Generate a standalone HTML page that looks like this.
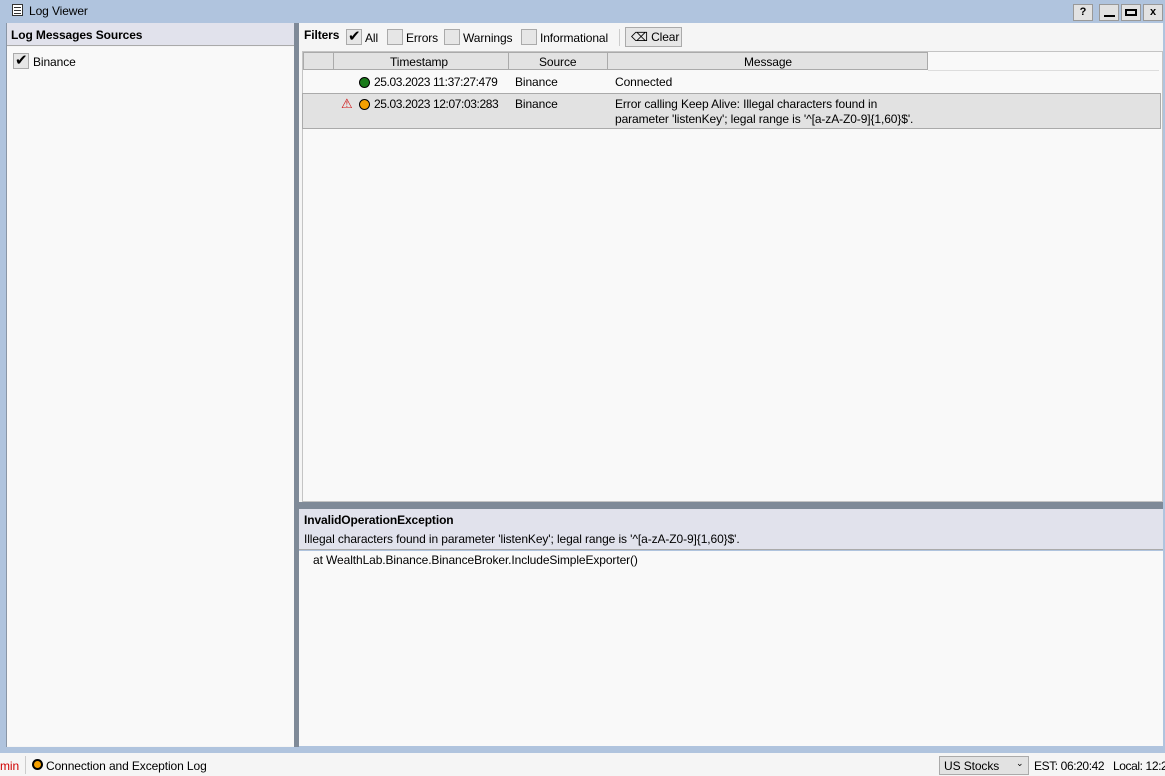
<!DOCTYPE html>
<html><head><style>
*{margin:0;padding:0;box-sizing:border-box}
body{width:1165px;height:776px;overflow:hidden;background:#f5f5f5;font-family:"Liberation Sans",sans-serif;font-size:12px;color:#000;position:relative}
.a{position:absolute}
.t{white-space:nowrap;letter-spacing:-0.1px}
.cb{position:absolute;width:16px;height:16px;border:1px solid #aaa;background:#e6e6e6}
.btn{position:absolute;top:4px;width:20px;height:17px;background:#e2e2e2;border:1px solid #999}
</style></head><body>
<div class="a" style="left:0;top:0;width:1165px;height:753px;background:#b0c4de"></div>
<div class="a t" style="left:12px;top:4px;width:11px;height:12px;border:1px solid #333;background:#fff"></div>
<div class="a" style="left:14px;top:7px;width:7px;height:1px;background:#333;box-shadow:0 3px #333,0 6px #333"></div>
<div class="a t" style="left:29px;top:4px;font-size:12px">Log Viewer</div>
<div class="btn" style="left:1073px;text-align:center;font-weight:bold;font-size:11px;line-height:15px">?</div>
<div class="btn" style="left:1099px"><div class="a" style="left:4px;top:10px;width:11px;height:2px;background:#000"></div></div>
<div class="btn" style="left:1121px"><div class="a" style="left:3px;top:4px;width:12px;height:7px;border:2px solid #000"></div></div>
<div class="btn" style="left:1143px;text-align:center;font-weight:bold;font-size:11px;line-height:15px">x</div>

<div class="a" style="left:6px;top:23px;width:288px;height:724px;background:#f5f5f5;border-left:1px solid #8a96a6"></div>
<div class="a" style="left:7px;top:23px;width:287px;height:23px;background:#e1e2ec;border-bottom:1px solid #aaa"></div>
<div class="a t" style="left:11px;top:28px;font-weight:bold">Log Messages Sources</div>
<div class="a" style="left:7px;top:47px;width:287px;height:699px;background:#f9f9f9"></div>
<div class="cb" style="left:13px;top:53px"></div>
<div class="a" style="left:15px;top:51px;font-size:15px">✔</div>
<div class="a t" style="left:33px;top:55px">Binance</div>

<div class="a" style="left:294px;top:23px;width:5px;height:724px;background:#7f8a98"></div>

<div class="a" style="left:299px;top:23px;width:864px;height:479px;background:#f5f5f5"></div>
<div class="a t" style="left:304px;top:28px;font-weight:bold">Filters</div>
<div class="cb" style="left:346px;top:29px"></div><div class="a" style="left:348px;top:27px;font-size:15px">✔</div>
<div class="a t" style="left:365px;top:31px">All</div>
<div class="cb" style="left:387px;top:29px"></div><div class="a t" style="left:406px;top:31px">Errors</div>
<div class="cb" style="left:444px;top:29px"></div><div class="a t" style="left:463px;top:31px">Warnings</div>
<div class="cb" style="left:521px;top:29px"></div><div class="a t" style="left:540px;top:31px">Informational</div>
<div class="a" style="left:619px;top:29px;width:1px;height:17px;background:#ccc"></div>
<div class="a" style="left:625px;top:27px;width:57px;height:20px;background:#e6e6e6;border:1px solid #aaa"></div>
<div class="a t" style="left:631px;top:30px">⌫&nbsp;Clear</div>

<div class="a" style="left:302px;top:51px;width:861px;height:451px;background:#f9f9f9;border:1px solid #c4c4c4"></div>
<div class="a" style="left:303px;top:52px;width:625px;height:18px;background:#e2e2e2;border:1px solid #aaa"></div>
<div class="a" style="left:333px;top:52px;width:1px;height:18px;background:#aaa"></div>
<div class="a" style="left:508px;top:52px;width:1px;height:18px;background:#aaa"></div>
<div class="a" style="left:607px;top:52px;width:1px;height:18px;background:#aaa"></div>
<div class="a t" style="left:390px;top:55px">Timestamp</div>
<div class="a t" style="left:539px;top:55px">Source</div>
<div class="a t" style="left:744px;top:55px">Message</div>
<div class="a" style="left:928px;top:70px;width:231px;height:1px;background:#ddd"></div>

<div class="a" style="left:359px;top:77px;width:11px;height:11px;border-radius:50%;background:#1a7a1a;border:1px solid #000"></div>
<div class="a t" style="left:374px;top:75px;letter-spacing:-0.4px">25.03.2023 11:37:27:479</div>
<div class="a t" style="left:515px;top:75px">Binance</div>
<div class="a t" style="left:615px;top:75px">Connected</div>

<div class="a" style="left:302px;top:93px;width:859px;height:36px;background:#e2e2e2;border:1px solid #aaa"></div>
<div class="a" style="left:341px;top:96px;color:#d01010;font-size:13px">⚠</div>
<div class="a" style="left:359px;top:99px;width:11px;height:11px;border-radius:50%;background:#f5a000;border:1px solid #000"></div>
<div class="a t" style="left:374px;top:97px;letter-spacing:-0.4px">25.03.2023 12:07:03:283</div>
<div class="a t" style="left:515px;top:97px">Binance</div>
<div class="a t" style="left:615px;top:97px;line-height:15px">Error calling Keep Alive: Illegal characters found in<br>parameter 'listenKey'; legal range is '^[a-zA-Z0-9]{1,60}$'.</div>

<div class="a" style="left:299px;top:502px;width:864px;height:7px;background:#7f8a98"></div>
<div class="a" style="left:299px;top:509px;width:864px;height:41px;background:#e1e2ec;border-bottom:1px solid #aaa"></div>
<div class="a t" style="left:304px;top:513px;font-weight:bold">InvalidOperationException</div>
<div class="a t" style="left:304px;top:532px">Illegal characters found in parameter 'listenKey'; legal range is '^[a-zA-Z0-9]{1,60}$'.</div>
<div class="a" style="left:299px;top:551px;width:864px;height:195px;background:#f9f9f9"></div>
<div class="a t" style="left:313px;top:553px">at WealthLab.Binance.BinanceBroker.IncludeSimpleExporter()</div>

<div class="a" style="left:0;top:753px;width:1165px;height:23px;background:#f5f5f5"></div>
<div class="a t" style="left:0;top:759px;color:#d00000">min</div>
<div class="a" style="left:25px;top:756px;width:1px;height:18px;background:#ccc"></div>
<div class="a" style="left:32px;top:759px;width:11px;height:11px;border-radius:50%;background:#f5a000;border:2px solid #000"></div>
<div class="a t" style="left:46px;top:759px">Connection and Exception Log</div>
<div class="a" style="left:939px;top:756px;width:90px;height:19px;background:#e2e2e2;border:1px solid #aaa"></div>
<div class="a t" style="left:944px;top:759px">US Stocks</div>
<div class="a" style="left:1016px;top:758px;font-size:9px">⌄</div>
<div class="a t" style="left:1034px;top:759px;letter-spacing:-0.4px">EST: 06:20:42&nbsp;&nbsp;&nbsp;Local: 12:20</div>
</body></html>
